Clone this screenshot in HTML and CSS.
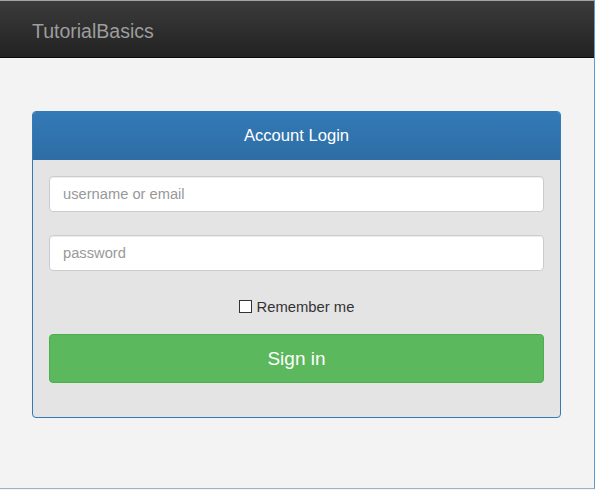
FILE: index.html
```html
<!DOCTYPE html>
<html>
<head>
<meta charset="utf-8">
<link rel="stylesheet" href="styles.css">
</head>
<body>
<div class="frame">
  <nav class="navbar"><span class="brand">TutorialBasics</span></nav>
  <main class="content">
    <section class="panel">
      <header class="panel-heading">Account Login</header>
      <form class="panel-body">
        <input class="field" type="text" placeholder="username or email">
        <input class="field" type="password" placeholder="password">
        <label class="remember"><span class="box"></span>Remember me</label>
        <button class="btn" type="button">Sign in</button>
      </form>
    </section>
  </main>
</div>
</body>
</html>
```
FILE: styles.css
```css
html, body { margin: 0; padding: 0; background: #f3f3f3; }
body { font-family: "Liberation Sans", Arial, sans-serif; }
.frame {
  width: 594px; height: 488px;
  border-right: 1px solid #5b9bd5;
  border-bottom: 1px solid #9ab3c8;
  background: #f3f3f3;
  display: flex; flex-direction: column;
}
.navbar {
  height: 56px;
  box-sizing: border-box;
  border-top: 1px solid #a3a3a3;
  border-bottom: 1px solid #0a0a0a;
  background: linear-gradient(#3b3b3b, #222);
  display: flex; align-items: center;
  padding: 3px 0 0 32px;
  height: 58px;
}
.brand { color: #9d9d9d; font-size: 19.5px; line-height: 20px; }
.content { padding: 53px 33px 0 32px; }
.panel {
  border: 1px solid #337ab7;
  border-radius: 4px;
  background: #e4e4e4;
  overflow: hidden;
}
.panel-heading {
  height: 48px;
  background: linear-gradient(#337ab7, #2e6da4);
  color: #fff; font-size: 16.6px;
  display: flex; align-items: center; justify-content: center;
}
.panel-body {
  padding: 16px 16px 34px;
  display: flex; flex-direction: column;
  margin: 0;
}
.field {
  height: 36px; box-sizing: border-box;
  border: 1px solid #ccc; border-radius: 4px;
  background: #fff;
  padding: 0 13px;
  font: 14.7px "Liberation Sans", Arial, sans-serif;
  color: #555;
  margin: 0 0 23px;
  box-shadow: inset 0 1px 1px rgba(0,0,0,.075);
}
.field::placeholder { color: #999; }
.remember {
  align-self: center;
  display: flex; align-items: center;
  font-size: 14.8px; color: #333;
  margin: 0 0 16px;
  height: 24px;
}
.box {
  width: 11px; height: 11px;
  border: 1px solid #333; background: #fff;
  margin-right: 5px;
  position: relative; top: -1px;
}
.remember { padding-top: 2px; box-sizing: border-box; }
.btn {
  height: 49px;
  background: #5cb85c;
  border: 1px solid #4cae4c;
  border-radius: 4px;
  color: #fff;
  font: 19px "Liberation Sans", Arial, sans-serif;
  padding: 0;
}
```
